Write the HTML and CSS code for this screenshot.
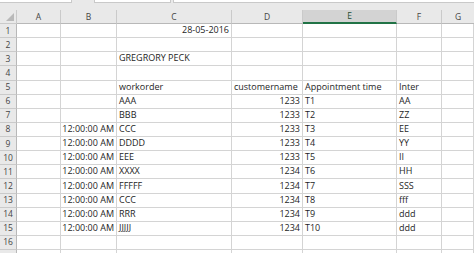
FILE: index.html
```html
<!DOCTYPE html>
<html>
<head>
<meta charset="utf-8">
<link rel="stylesheet" href="styles.css">
</head>
<body>
<div class="app">
  <div class="topbar">
    <div class="box namebox"></div>
    <div class="box fxbox"></div>
    <div class="box formula"></div>
  </div>
  <div class="sheet">
    <div class="hd corner"><svg width="8" height="8" viewBox="0 0 8 8"><polygon points="8,0 8,8 0,8" fill="#b9b9b9"/></svg></div>
    <div class="hd col">A</div>
    <div class="hd col">B</div>
    <div class="hd col">C</div>
    <div class="hd col">D</div>
    <div class="hd col sel">E</div>
    <div class="hd col">F</div>
    <div class="hd col last">G</div>

    <div class="hd rn">1</div><div class="c"></div><div class="c"></div><div class="c r">28-05-2016</div><div class="c"></div><div class="c"></div><div class="c"></div><div class="c"></div>
    <div class="hd rn">2</div><div class="c"></div><div class="c"></div><div class="c"></div><div class="c"></div><div class="c"></div><div class="c"></div><div class="c"></div>
    <div class="hd rn">3</div><div class="c"></div><div class="c"></div><div class="c">GREGRORY PECK</div><div class="c"></div><div class="c"></div><div class="c"></div><div class="c"></div>
    <div class="hd rn">4</div><div class="c"></div><div class="c"></div><div class="c"></div><div class="c"></div><div class="c"></div><div class="c"></div><div class="c"></div>
    <div class="hd rn">5</div><div class="c"></div><div class="c"></div><div class="c">workorder</div><div class="c">customername</div><div class="c">Appointment time</div><div class="c">Inter</div><div class="c"></div>
    <div class="hd rn">6</div><div class="c"></div><div class="c"></div><div class="c">AAA</div><div class="c r">1233</div><div class="c">T1</div><div class="c">AA</div><div class="c"></div>
    <div class="hd rn">7</div><div class="c"></div><div class="c"></div><div class="c">BBB</div><div class="c r">1233</div><div class="c">T2</div><div class="c">ZZ</div><div class="c"></div>
    <div class="hd rn">8</div><div class="c"></div><div class="c r">12:00:00 AM</div><div class="c">CCC</div><div class="c r">1233</div><div class="c">T3</div><div class="c">EE</div><div class="c"></div>
    <div class="hd rn">9</div><div class="c"></div><div class="c r">12:00:00 AM</div><div class="c">DDDD</div><div class="c r">1233</div><div class="c">T4</div><div class="c">YY</div><div class="c"></div>
    <div class="hd rn">10</div><div class="c"></div><div class="c r">12:00:00 AM</div><div class="c">EEE</div><div class="c r">1233</div><div class="c">T5</div><div class="c">II</div><div class="c"></div>
    <div class="hd rn">11</div><div class="c"></div><div class="c r">12:00:00 AM</div><div class="c">XXXX</div><div class="c r">1234</div><div class="c">T6</div><div class="c">HH</div><div class="c"></div>
    <div class="hd rn">12</div><div class="c"></div><div class="c r">12:00:00 AM</div><div class="c">FFFFF</div><div class="c r">1234</div><div class="c">T7</div><div class="c">SSS</div><div class="c"></div>
    <div class="hd rn">13</div><div class="c"></div><div class="c r">12:00:00 AM</div><div class="c">CCC</div><div class="c r">1234</div><div class="c">T8</div><div class="c">fff</div><div class="c"></div>
    <div class="hd rn">14</div><div class="c"></div><div class="c r">12:00:00 AM</div><div class="c">RRR</div><div class="c r">1234</div><div class="c">T9</div><div class="c">ddd</div><div class="c"></div>
    <div class="hd rn">15</div><div class="c"></div><div class="c r">12:00:00 AM</div><div class="c">JJJJJ</div><div class="c r">1234</div><div class="c">T10</div><div class="c">ddd</div><div class="c"></div>
    <div class="hd rn">16</div><div class="c"></div><div class="c"></div><div class="c"></div><div class="c"></div><div class="c"></div><div class="c"></div><div class="c"></div>
    <div class="hd rn"></div><div class="c"></div><div class="c"></div><div class="c"></div><div class="c"></div><div class="c"></div><div class="c"></div><div class="c"></div>
  </div>
</div>
</body>
</html>
```

FILE: styles.css
```css
* { box-sizing: border-box; }
html, body { margin: 0; padding: 0; background: #ffffff; }
body { width: 474px; height: 253px; overflow: hidden; }
.app {
  width: 474px;
  height: 253px;
  overflow: hidden;
  font-family: "Open Sans", "Noto Sans", sans-serif;
  font-size: 9px;
  color: #1e1e1e;
  background: #e9e9e9;
}
.topbar {
  display: flex;
  height: 10px;
  align-items: flex-start;
}
.box {
  height: 3px;
  background: #ffffff;
  border-bottom: 1px solid #c9c9c9;
}
.namebox { width: 72px; border-right: 1px solid #c9c9c9; }
.fxbox { width: 77px; margin-left: 22px; border-left: 1px solid #c9c9c9; border-right: 1px solid #c9c9c9; }
.formula { flex: 1; margin-left: 2px; border-left: 1px solid #c9c9c9; }
.sheet {
  display: grid;
  grid-template-columns: 17px 44px 56px 115px 71px 94px 45px 32px;
  grid-template-rows: 14px repeat(17, 14.14px);
  background: #ffffff;
}
.hd {
  background: #e9e9e9;
  color: #444444;
  display: flex;
  align-items: center;
  justify-content: center;
  border-right: 1px solid #cacaca;
  border-bottom: 1px solid #cacaca;
  font-size: 8.5px;
  line-height: 10px;
}
.corner { justify-content: flex-end; align-items: flex-end; padding: 0 2px 2px 0; background: #e9e9e9; }
.col { border-bottom: 1px solid #b8b8b8; }
.col.last { border-right: none; }
.col.sel {
  background: #d3d3d3;
  color: #1e4e2f;
  border-bottom: 2px solid #217346;
}
.rn { border-right: 1px solid #b8b8b8; }
.c {
  border-right: 1px solid #d4d4d4;
  border-bottom: 1px solid #d4d4d4;
  display: flex;
  align-items: flex-end;
  padding: 0 2px 1px 2px;
  line-height: 12px;
  white-space: nowrap;
  overflow: visible;
}
.c.r { justify-content: flex-end; }
```
